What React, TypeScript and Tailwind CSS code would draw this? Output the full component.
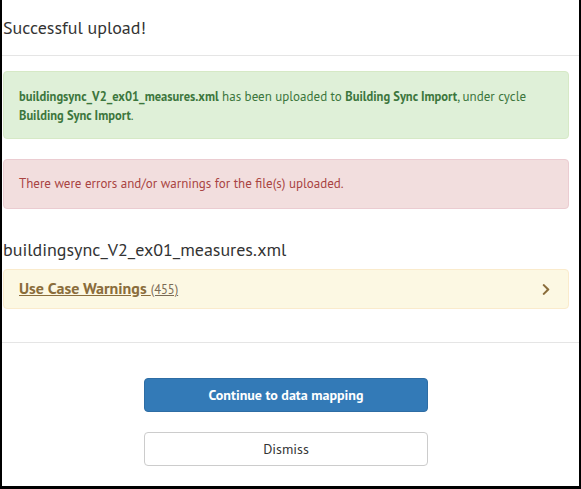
export default function App() {
  const font = { fontFamily: '"PT Sans", Lato, "Noto Sans", sans-serif' };
  return (
    <div
      className="w-[581px] h-[489px] bg-white border-l-2 border-r-2 border-b-[3px] border-black overflow-hidden text-[#333]"
      style={font}
    >
      <div className="h-[56px] border-b border-[#e5e5e5] pl-px pr-[10px] flex items-center">
        <h4 className="text-[18px] font-light leading-[20px] text-[#333]">Successful upload!</h4>
      </div>

      <div className="h-[287px] pl-px pr-[10px] pt-[15px] border-b border-[#e5e5e5]">
        <div className="h-[68px] bg-[#dff0d8] border border-[#d6e9c6] text-[#3c763d] rounded-[4px] px-[15px] pt-[15px] text-[13px] leading-[18px] mb-[20px]">
          <strong className="text-[12.5px]">buildingsync_V2_ex01_measures.xml</strong> has been uploaded to{" "}
          <strong className="text-[12.5px]">Building Sync Import</strong>, under cycle{" "}
          <strong className="text-[12.5px]">Building Sync Import</strong>.
        </div>
        <div className="h-[50px] bg-[#f2dede] border border-[#ebccd1] text-[#a94442] rounded-[4px] px-[15px] flex items-center text-[13px] leading-[18px]">
          There were errors and/or warnings for the file(s) uploaded.
        </div>
        <div className="h-[60px] pb-[9px] flex items-end text-[18px] leading-[21px] text-[#333]">
          buildingsync_V2_ex01_measures.xml
        </div>
        <div className="h-[40px] bg-[#fcf8e3] border border-[#faebcc] rounded-[4px] px-[15px] flex items-center justify-between text-[#8a6d3b]">
          <a href="#" className="leading-[17px]">
            <span className="text-[16px] font-bold underline">Use Case Warnings </span>
            <span className="text-[12.5px] underline text-[#7a6a55]">(455)</span>
          </a>
          <svg viewBox="0 0 320 512" className="w-[10px] h-[13px] mr-[2px]" fill="#8a6d3b">
            <path d="M285.5 273L91.1 467.3c-9.4 9.4-24.6 9.4-33.9 0l-22.7-22.7c-9.4-9.4-9.4-24.5 0-33.9L188.5 256 34.5 101.3c-9.3-9.4-9.3-24.5 0-33.9l22.7-22.7c9.4-9.4 24.6-9.4 33.9 0L285.5 239c9.4 9.4 9.4 24.6 0 34z" />
          </svg>
        </div>
      </div>

      <div className="pl-px pr-[10px] pt-[35px] flex flex-col items-center gap-[20px]">
        <button className="w-[284px] h-[34px] rounded-[4px] bg-[#337ab7] border border-[#2e6da4] text-white text-[14px] font-semibold">
          Continue to data mapping
        </button>
        <button className="w-[284px] h-[34px] rounded-[4px] bg-white border border-[#ccc] text-[#333] text-[14px]">
          Dismiss
        </button>
      </div>
    </div>
  );
}
